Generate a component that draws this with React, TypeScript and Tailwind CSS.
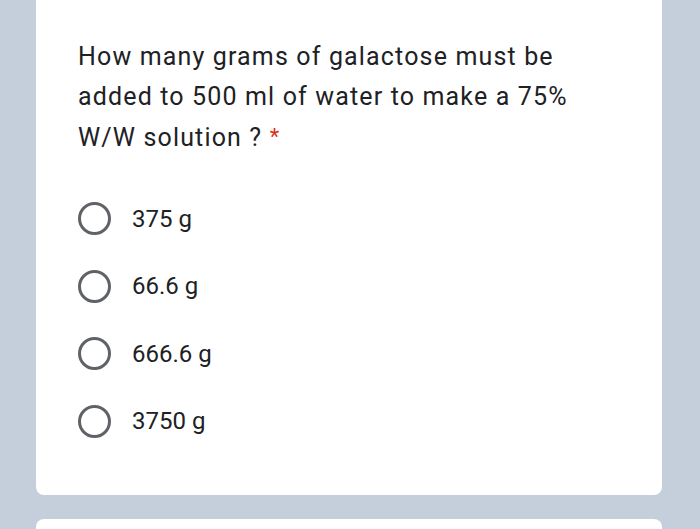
const options = ["375 g", "66.6 g", "666.6 g", "3750 g"]

export default function App() {
  return (
    <div className="h-[529px] w-[700px] overflow-hidden bg-[#c4cfdb] font-['Roboto',sans-serif]">
      <div className="mx-[36px] -mt-[8px] w-[626px] rounded-[8px] bg-white pb-[40px] pl-[42px] pr-[30px] pt-[45px]">
        <p className="text-[25px] leading-[40px] tracking-[1.15px] text-[#202124]">
          How many grams of galactose must be
          <br />
          added to 500 ml of water to make a 75%
          <br />
          W/W solution ? <span className="align-[2px] text-[22px] text-[#d93025]">*</span>
        </p>
        <div className="mt-[27px] flex flex-col">
          {options.map((o) => (
            <div key={o} className="flex h-[67.5px] items-center">
              <span className="h-[33px] w-[33px] rounded-full border-[3.5px] border-[#5f6368]" />
              <span className="ml-[21px] text-[24px] text-[#202124]">{o}</span>
            </div>
          ))}
        </div>
      </div>
      <div className="mx-[36px] mt-[24px] h-[40px] w-[626px] rounded-[8px] bg-white" />
    </div>
  )
}
